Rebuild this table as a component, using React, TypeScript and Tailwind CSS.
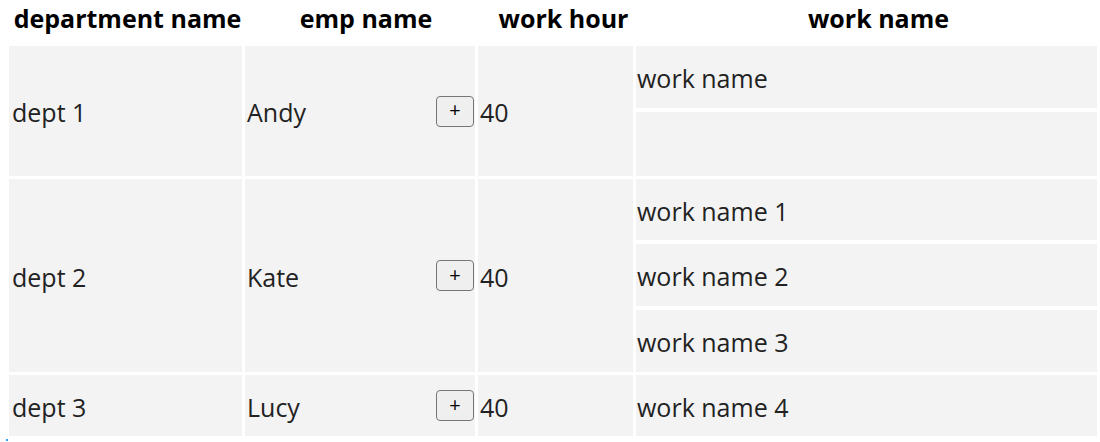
import React from "react";

type Row = { dept: string; emp: string; hour: string; works: { label: string; h: number }[] };

const rows: Row[] = [
  { dept: "dept 1", emp: "Andy", hour: "40", works: [{ label: "work name", h: 62 }, { label: "", h: 64 }] },
  {
    dept: "dept 2",
    emp: "Kate",
    hour: "40",
    works: [
      { label: "work name 1", h: 61 },
      { label: "work name 2", h: 62 },
      { label: "work name 3", h: 62 },
    ],
  },
  { dept: "dept 3", emp: "Lucy", hour: "40", works: [{ label: "work name 4", h: 61 }] },
];

const font = { fontFamily: '"Open Sans", "Noto Sans", sans-serif' };

export default function App() {
  return (
    <div className="w-[1100px] h-[442px] bg-white overflow-hidden pl-[9px]" style={font}>
      <div className="grid grid-cols-[233px_230px_155px_461px] gap-x-[3px] h-[43px] mb-[3px] text-[25px] font-bold text-black">
        <div className="flex items-center justify-center pl-[4px] pb-[7px]">department name</div>
        <div className="flex items-center justify-center pl-[12px] pb-[7px]">emp name</div>
        <div className="flex items-center justify-center pl-[16px] pb-[7px]">work hour</div>
        <div className="flex items-center justify-center pl-[24px] pb-[7px]">work name</div>
      </div>
      <div className="flex flex-col gap-y-[3px] text-[25px] text-[#222]">
        {rows.map((r) => (
          <div key={r.dept} className="grid grid-cols-[233px_230px_155px_461px] gap-x-[3px]">
            <div className="bg-[#f3f3f3] flex items-center pl-[3px] pt-[4px]">{r.dept}</div>
            <div className="bg-[#f3f3f3] flex items-center justify-between pl-[2px] pr-[1px]">
              <span className="pt-[4px]">{r.emp}</span>
              <button className="w-[38px] h-[31px] border border-[#767676] rounded-[4px] bg-[#efefef] text-[20px] leading-none text-black flex items-center justify-center pb-[2px]">
                +
              </button>
            </div>
            <div className="bg-[#f3f3f3] flex items-center pl-[2px] pt-[4px]">{r.hour}</div>
            <div className="flex flex-col gap-y-[4px]">
              {r.works.map((w, i) => (
                <div key={i} className="bg-[#f3f3f3] flex items-center pl-[1px] pt-[4px]" style={{ height: w.h }}>
                  {w.label}
                </div>
              ))}
            </div>
          </div>
        ))}
      </div>
      <div className="ml-[-3px] mt-[3px] w-[2px] h-[2px] bg-[#3b9cff]" />
    </div>
  );
}
